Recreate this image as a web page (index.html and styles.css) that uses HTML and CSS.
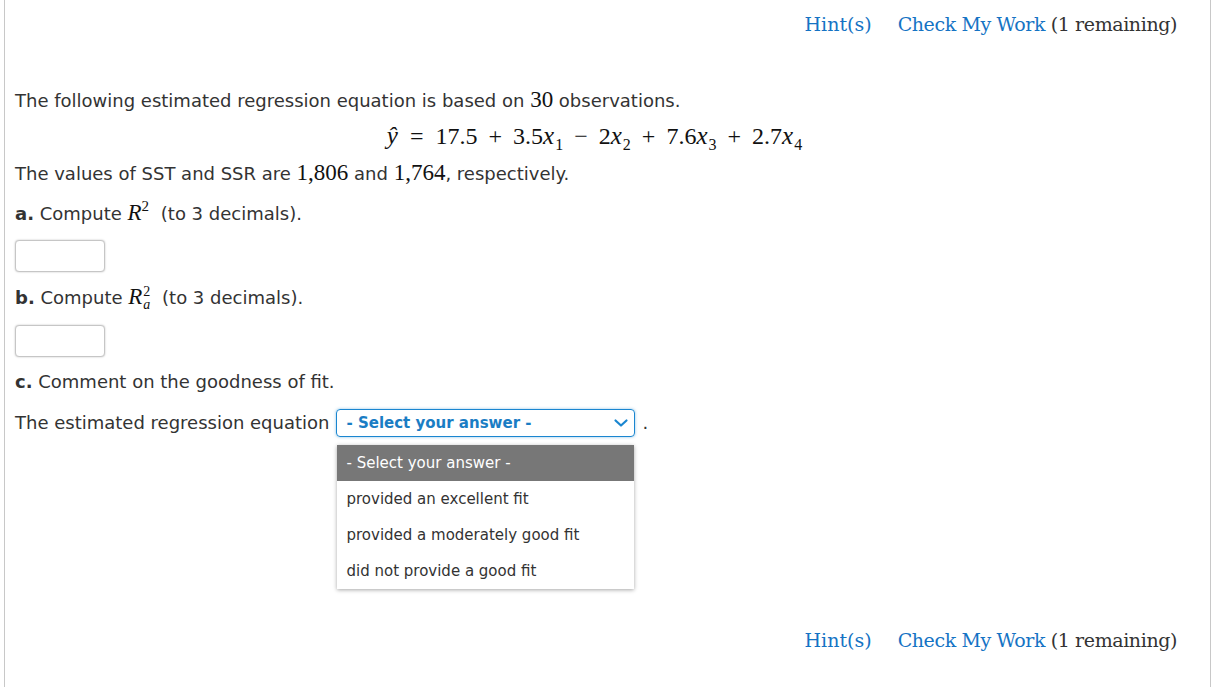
FILE: index.html
```html
<!DOCTYPE html>
<html lang="en">

<head>
    <meta charset="UTF-8">
    <meta name="viewport" content="width=device-width, initial-scale=1.0">
    <title>Regression - Question</title>
    <link rel="stylesheet" href="styles.css">
</head>

<body>
    <div class="page">
        <div class="actions">
            <a class="link" href="#">Hint(s)</a>
            <span class="check"><a class="link" href="#">Check My Work</a> (1 remaining)</span>
        </div>

        <div class="question">
            <p class="line first">The following estimated regression equation is based on <span class="num">30</span> observations.</p>
            <p class="equation"><i>ŷ</i><span class="rel">=</span>17.5<span class="op">+</span>3.5<i>x</i><sub>1</sub><span class="op">−</span>2<i>x</i><sub>2</sub><span class="op">+</span>7.6<i>x</i><sub>3</sub><span class="op">+</span>2.7<i>x</i><sub>4</sub></p>
            <p class="line">The values of SST and SSR are <span class="num">1,806</span> and <span class="num">1,764</span>, respectively.</p>

            <p class="line part"><b>a.</b> Compute <span class="math"><i>R</i><sup>2</sup></span> (to 3 decimals).</p>
            <input class="answer" type="text">

            <p class="line part"><b>b.</b> Compute <span class="math"><i>R</i><span class="supsub"><sup>2</sup><sub><i>a</i></sub></span></span> (to 3 decimals).</p>
            <input class="answer" type="text">

            <p class="line part"><b>c.</b> Comment on the goodness of fit.</p>
            <div class="select-row">
                <span>The estimated regression equation</span>
                <div class="dropdown">
                    <div class="select-box">
                        <span>- Select your answer -</span>
                        <svg width="16" height="10" viewBox="0 0 16 10"><path d="M2.5 2.5 L8 7.5 L13.5 2.5" fill="none" stroke="#1a86d0" stroke-width="2.2" stroke-linecap="round" stroke-linejoin="round"/></svg>
                    </div>
                    <ul class="options">
                        <li class="selected">- Select your answer -</li>
                        <li>provided an excellent fit</li>
                        <li>provided a moderately good fit</li>
                        <li>did not provide a good fit</li>
                    </ul>
                </div>
                <span>.</span>
            </div>
        </div>

        <div class="actions bottom">
            <a class="link" href="#">Hint(s)</a>
            <span class="check"><a class="link" href="#">Check My Work</a> (1 remaining)</span>
        </div>
    </div>
</body>

</html>
```

FILE: styles.css
```css
body {
    margin: 0;
    padding: 0;
    background-color: #ffffff;
    font-family: "DejaVu Sans", Verdana, sans-serif;
    color: #333333;
}

.page {
    margin-left: 4px;
    width: 1207px;
    height: 687px;
    border-left: 1px solid #c8c8c8;
    border-right: 1px solid #c8c8c8;
    box-sizing: border-box;
    padding: 0 10px;
}

.actions {
    display: flex;
    justify-content: flex-end;
    gap: 26px;
    padding-top: 10px;
    padding-right: 23px;
    font-family: "DejaVu Serif", Georgia, serif;
    font-size: 19px;
    color: #333333;
    line-height: 28px;
}

.check {
    letter-spacing: -0.4px;
}

.actions.bottom {
    padding-top: 0;
    margin-top: 37px;
}

.link {
    color: #1573c4;
    text-decoration: none;
}

.question {
    padding-top: 51px;
    font-size: 18px;
}

.line {
    margin: 0;
    line-height: 24px;
}

.first {
    margin-bottom: 11px;
}

.num {
    font-family: "Liberation Serif", "Times New Roman", serif;
    font-size: 23px;
    line-height: 0;
    color: #111111;
}

.equation {
    margin: 0 26px 13px 0;
    text-align: center;
    font-family: "Liberation Serif", "Times New Roman", serif;
    font-size: 24px;
    line-height: 25px;
    color: #111111;
}

.equation i {
    font-size: 25px;
    line-height: 0;
}

.equation sub {
    font-size: 16px;
    line-height: 0;
    margin-left: 1px;
}

.equation .rel {
    margin: 0 12px;
}

.equation .op {
    margin: 0 11px;
}

.math {
    font-family: "Liberation Serif", "Times New Roman", serif;
    font-size: 23px;
    line-height: 0;
    color: #111111;
    margin-right: 6px;
}

.math sup,
.math sub {
    font-size: 15px;
    line-height: 0;
}

.supsub {
    display: inline-flex;
    flex-direction: column;
    vertical-align: 8px;
    margin-left: 1px;
}

.supsub sup,
.supsub sub {
    vertical-align: baseline;
    font-size: 14px;
    line-height: 13px;
    height: 13px;
    overflow: visible;
}

.part {
    margin-top: 16px;
}

.answer {
    display: block;
    width: 90px;
    height: 32px;
    box-sizing: border-box;
    margin: 14px 0 0 0;
    border: 1px solid #c6c6c6;
    border-radius: 4px;
    box-shadow: 0 0 2px rgba(0, 0, 0, 0.25);
}

.answer + .part {
    margin-top: 13px;
}

.select-row {
    display: flex;
    align-items: flex-start;
    gap: 7px;
    margin-top: 15px;
    line-height: 28px;
}

.dropdown {
    width: 299px;
}

.select-box {
    height: 28px;
    box-sizing: border-box;
    border: 1px solid #1a86d0;
    border-radius: 4px;
    box-shadow: 0 0 3px rgba(26, 134, 208, 0.5);
    display: flex;
    align-items: center;
    justify-content: space-between;
    padding: 0 5px 0 9px;
    color: #1a7dc4;
    font-weight: bold;
    font-size: 15px;
}

.options {
    list-style: none;
    margin: 8px 0 0 1px;
    padding: 0;
    width: 297px;
    background-color: #ffffff;
    box-shadow: 0 1px 4px rgba(0, 0, 0, 0.35);
    font-size: 15px;
    color: #333333;
}

.options li {
    height: 36px;
    line-height: 36px;
    padding-left: 9px;
}

.options .selected {
    background-color: #777777;
    color: #ffffff;
}
```
